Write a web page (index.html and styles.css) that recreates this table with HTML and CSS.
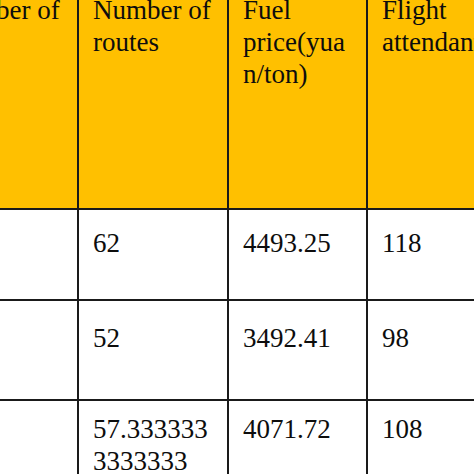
FILE: index.html
```html
<!DOCTYPE html>
<html>
<head>
<meta charset="utf-8">
<link rel="stylesheet" href="styles.css">
</head>
<body>
<div class="frame">
<table class="data">
<colgroup>
<col class="c1"><col class="c2"><col class="c3"><col class="c4">
</colgroup>
<thead>
<tr class="head">
<th>Number of</th>
<th>Number of routes</th>
<th>Fuel price(yuan/ton)</th>
<th>Flight attendants</th>
</tr>
</thead>
<tbody>
<tr class="r1"><td></td><td>62</td><td>4493.25</td><td>118</td></tr>
<tr class="r2"><td></td><td>52</td><td>3492.41</td><td>98</td></tr>
<tr class="r3"><td></td><td>57.3333333333333</td><td>4071.72</td><td>108</td></tr>
</tbody>
</table>
</div>
</body>
</html>
```
FILE: styles.css
```css
html, body {
  margin: 0;
  padding: 0;
  background: #ffffff;
  overflow: hidden;
  width: 474px;
  height: 474px;
}
.frame {
  margin: -25px 0 0 -74px;
}
.data {
  border-collapse: collapse;
  table-layout: fixed;
  width: 600px;
  font-family: "Liberation Serif", "Times New Roman", serif;
  font-size: 27px;
  line-height: 32px;
  color: #0d0d0d;
}
.c1 { width: 151px; }
.c2 { width: 150px; }
.c3 { width: 139px; }
.c4 { width: 160px; }
.data th, .data td {
  border: 2px solid #1a1a1a;
  text-align: left;
  vertical-align: top;
  font-weight: normal;
  padding-left: 14px;
  padding-right: 15px;
}
.data th {
  background: #ffc000;
  overflow-wrap: anywhere;
  padding-top: 17px;
  padding-bottom: 118px;
}
.r1 td { padding-top: 17px; padding-bottom: 40px; }
.r2 td { padding-top: 21px; padding-bottom: 45px; }
.r3 td { padding-top: 12px; padding-bottom: 20px; word-break: break-all; }
```
